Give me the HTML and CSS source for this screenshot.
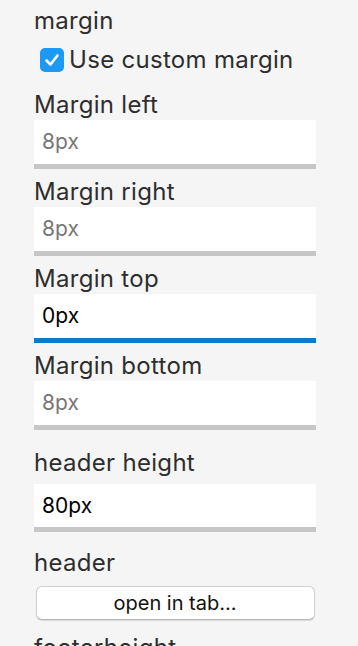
FILE: index.html
```html
<!DOCTYPE html>
<html>
<head>
<meta charset="utf-8">
<link rel="stylesheet" href="styles.css">
</head>
<body>
<div class="panel">
  <div class="title">margin</div>
  <label class="check">
    <span class="box"><svg viewBox="0 0 24 24" width="24" height="24"><path d="M6.5 12.5 L10.5 16.5 L17.5 7.5" fill="none" stroke="#fff" stroke-width="2.6" stroke-linecap="round" stroke-linejoin="round"/></svg></span>
    <span class="check-text">Use custom margin</span>
  </label>
  <div class="field first">
    <div class="label">Margin left</div>
    <div class="input placeholder">8px</div>
  </div>
  <div class="field">
    <div class="label">Margin right</div>
    <div class="input placeholder">8px</div>
  </div>
  <div class="field">
    <div class="label">Margin top</div>
    <div class="input focused">0px</div>
  </div>
  <div class="field">
    <div class="label">Margin bottom</div>
    <div class="input placeholder">8px</div>
  </div>
  <div class="field group">
    <div class="label">header height</div>
    <div class="input loose">80px</div>
  </div>
  <div class="field group2">
    <div class="label">header</div>
    <button class="btn">open in tab...</button>
  </div>
  <div class="field last">
    <div class="label">footerheight</div>
  </div>
</div>
</body>
</html>
```
FILE: styles.css
```css
html, body {
  margin: 0;
  padding: 0;
  background: #f5f5f5;
  overflow: hidden;
}
body {
  font-family: Inter, "Noto Sans", sans-serif;
  font-size: 24px;
  letter-spacing: 0.3px;
  color: #2e2e2e;
}
.panel {
  padding: 8px 0 0 34px;
  width: 282px;
}
.title, .label, .check {
  height: 26px;
  line-height: 26px;
  white-space: nowrap;
}
.check {
  display: flex;
  align-items: center;
  margin-top: 13px;
  padding-left: 6px;
}
.box {
  width: 24px;
  height: 24px;
  border-radius: 5px;
  background: #1c98f5;
  display: block;
  flex: none;
}
.box svg { display: block; }
.check-text {
  margin-left: 5px;
}
.field { margin-top: 10px; }
.field.first { margin-top: 19px; }
.label { margin-bottom: 2px; }
.input {
  box-sizing: border-box;
  height: 49px;
  background: #fff;
  border-bottom: 5px solid #c6c6c6;
  padding-left: 8px;
  font-size: 21px;
  letter-spacing: 0;
  line-height: 44px;
  color: #000;
}
.input.placeholder { color: #777; }
.input.focused { border-bottom-color: #0a7acb; }
.field.group { margin-top: 20px; }
.field.group .label { margin-bottom: 8px; }
.input.loose { height: 48px; line-height: 43px; }
.field.group2 { margin-top: 18px; }
.field.group2 .label { margin-bottom: 10px; }
.btn {
  display: block;
  box-sizing: border-box;
  margin-left: 1.5px;
  width: 279px;
  height: 34px;
  background: #fff;
  border: 1px solid #cfcfcf;
  border-bottom-color: #b8b8b8;
  border-radius: 6px;
  box-shadow: 0 1px 1px rgba(0,0,0,0.12);
  font-family: Inter, "Noto Sans", sans-serif;
  font-size: 20px;
  letter-spacing: 0;
  color: #111;
  padding: 0;
  line-height: 32px;
}
.field.last { margin-top: 15px; }
```
